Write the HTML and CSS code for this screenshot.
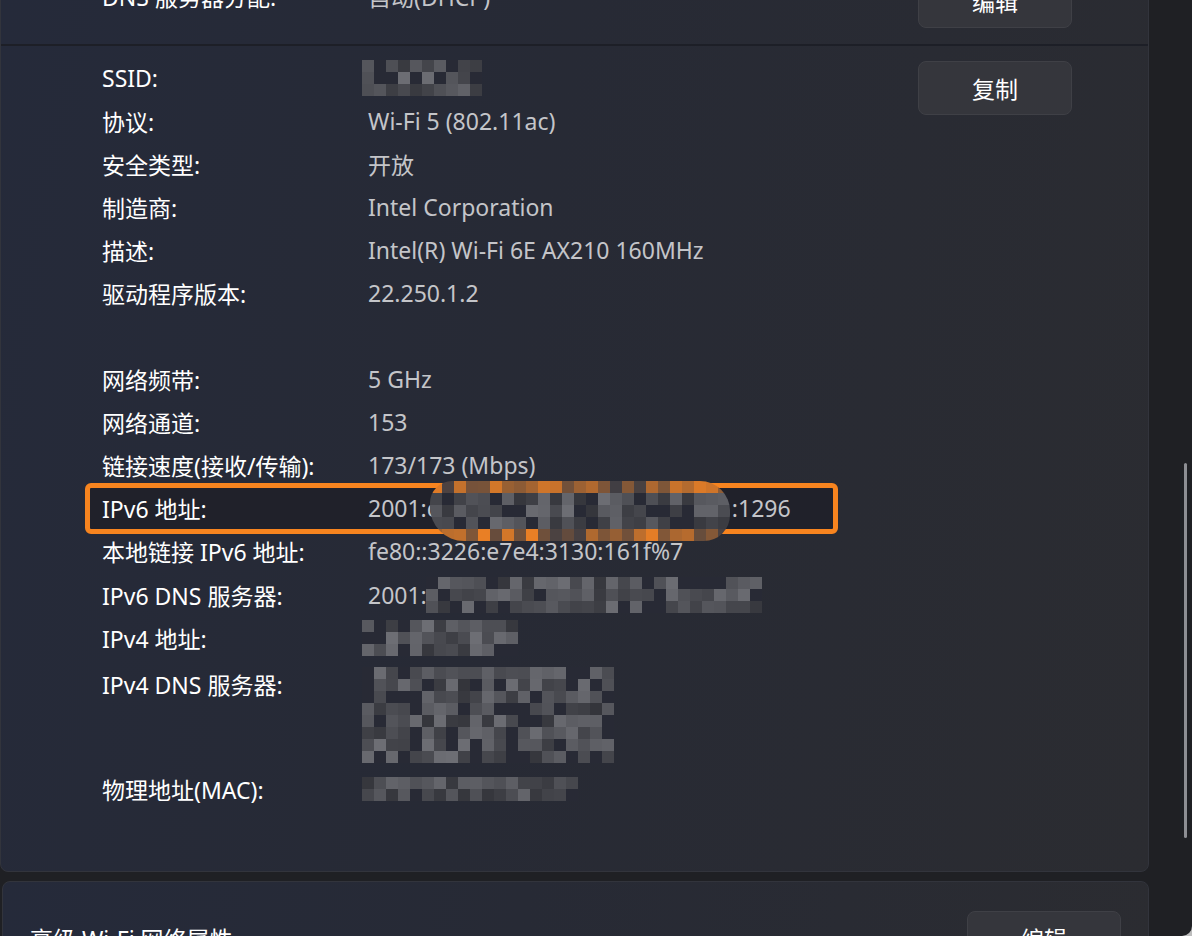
FILE: index.html
```html
<!doctype html>
<html lang="zh-CN">
<head>
    <meta charset="utf-8">
    <meta name="viewport" content="width=device-width, initial-scale=1">
    <title>Wi-Fi 属性</title>
    <link rel="stylesheet" href="styles.css">
</head>
<body>
    <div class="window">
        <div class="content">
            <!-- Tarjeta de propiedades -->
            <div class="card">
                <div class="section top-section">
                    <div class="row">
                        <span class="label">DNS 服务器分配:</span>
                        <span class="value">自动(DHCP)</span>
                    </div>
                    <button class="button">编辑</button>
                </div>

                <div class="section props">
                    <div class="props-list">
                        <div class="row">
                            <span class="label">SSID:</span>
                            <span class="value"><span class="mosaic shift" data-cols="10" data-rows="3" data-seed="7"></span></span>
                        </div>
                        <div class="row">
                            <span class="label">协议:</span>
                            <span class="value">Wi-Fi 5 (802.11ac)</span>
                        </div>
                        <div class="row">
                            <span class="label">安全类型:</span>
                            <span class="value">开放</span>
                        </div>
                        <div class="row">
                            <span class="label">制造商:</span>
                            <span class="value">Intel Corporation</span>
                        </div>
                        <div class="row">
                            <span class="label">描述:</span>
                            <span class="value">Intel(R) Wi-Fi 6E AX210 160MHz</span>
                        </div>
                        <div class="row">
                            <span class="label">驱动程序版本:</span>
                            <span class="value">22.250.1.2</span>
                        </div>
                        <div class="row"></div>
                        <div class="row">
                            <span class="label">网络频带:</span>
                            <span class="value">5 GHz</span>
                        </div>
                        <div class="row">
                            <span class="label">网络通道:</span>
                            <span class="value">153</span>
                        </div>
                        <div class="row">
                            <span class="label">链接速度(接收/传输):</span>
                            <span class="value">173/173 (Mbps)</span>
                        </div>
                        <div class="row highlight">
                            <span class="label">IPv6 地址:</span>
                            <span class="value">2001:c<span class="mosaic blob" data-cols="25" data-rows="5" data-seed="11" data-edge="orange"></span>:1296</span>
                        </div>
                        <div class="row">
                            <span class="label">本地链接 IPv6 地址:</span>
                            <span class="value">fe80::3226:e7e4:3130:161f%7</span>
                        </div>
                        <div class="row">
                            <span class="label">IPv6 DNS 服务器:</span>
                            <span class="value">2001:2<span class="mosaic over" data-cols="28" data-rows="3" data-seed="23"></span></span>
                        </div>
                        <div class="row">
                            <span class="label">IPv4 地址:</span>
                            <span class="value"><span class="mosaic shift" data-cols="13" data-rows="3" data-seed="31"></span></span>
                        </div>
                        <div class="row tall">
                            <span class="label">IPv4 DNS 服务器:</span>
                            <span class="value"><span class="mosaic shift" data-cols="21" data-rows="8" data-seed="47"></span></span>
                        </div>
                        <div class="row">
                            <span class="label">物理地址(MAC):</span>
                            <span class="value"><span class="mosaic shift" data-cols="18" data-rows="2" data-seed="59"></span></span>
                        </div>
                    </div>
                    <button class="button copy">复制</button>
                </div>
            </div>

            <!-- Propiedades avanzadas -->
            <div class="card card-bottom">
                <span class="label">高级 Wi-Fi 网络属性</span>
                <button class="button">编辑</button>
            </div>
        </div>

        <div class="rail"><div class="thumb"></div></div>
    </div>

    <script>
        // Generador pseudoaleatorio para que el mosaico sea siempre igual
        function seeded(seed) {
            let s = seed;
            return function () {
                s = (s * 9301 + 49297) % 233280;
                return s / 233280;
            };
        }

        // Rellenar cada mosaico con celdas grises
        document.querySelectorAll('.mosaic').forEach(function (el) {
            const cols = +el.dataset.cols;
            const rows = +el.dataset.rows;
            const rnd = seeded(+el.dataset.seed);
            const orange = el.dataset.edge === 'orange';
            el.style.gridTemplateColumns = 'repeat(' + cols + ', 12px)';

            for (let y = 0; y < rows; y++) {
                for (let x = 0; x < cols; x++) {
                    const cell = document.createElement('span');
                    const r = rnd();
                    let color;
                    if (orange && (y === 0 || y === rows - 1)) {
                        // borde naranja mezclado con gris
                        const mix = rnd();
                        const a = [240, 130, 36], b = [58, 59, 68];
                        color = 'rgb(' + a.map(function (v, i) { return Math.round(v * mix + b[i] * (1 - mix)); }).join(',') + ')';
                    } else if (r < 0.22) {
                        color = 'rgb(40, 42, 53)';
                    } else {
                        const g = Math.round(52 + rnd() * 58);
                        color = 'rgb(' + g + ',' + (g + 1) + ',' + (g + 7) + ')';
                    }
                    cell.style.background = color;
                    el.appendChild(cell);
                }
            }
        });
    </script>
</body>
</html>
```

FILE: styles.css
```css
/* Colores */
:root {
    --outside: #bdbdbd;
    --window-bg: #1f2024;
    --card-border: #32343c;
    --divider: #1d1f27;
    --label-color: #ffffff;
    --value-color: #c4c5c9;
    --button-bg: #35363c;
    --button-border: #3f4046;
    --highlight: #f7841f;
}

* {
    box-sizing: border-box;
}

body {
    margin: 0;
    background-color: var(--outside);
    font-family: "Noto Sans", "Noto Sans CJK SC", sans-serif;
    font-size: 23px;
    overflow: hidden;
}

.window {
    display: flex;
    width: 1192px;
    height: 936px;
    background-color: var(--window-bg);
    border-bottom-right-radius: 10px;
    overflow: hidden;
}

.content {
    width: 1149px;
    margin-top: -44px;
    display: flex;
    flex-direction: column;
    gap: 9px;
}

.card {
    background: linear-gradient(100deg, #252a3a 0%, #272a35 45%, #2b2c31 100%);
    border: 1px solid var(--card-border);
    border-radius: 0 0 8px 8px;
}

.section {
    display: flex;
    justify-content: space-between;
}

.top-section {
    height: 89px;
    align-items: center;
    padding: 0 76px 0 101px;
    border-bottom: 2px solid var(--divider);
}

.top-section .row {
    margin-top: -10px;
}

.props {
    align-items: flex-start;
    padding: 10px 76px 61px 101px;
}

.props-list {
    flex: 1;
}

.row {
    display: flex;
    align-items: center;
    height: 43.1px;
}

.row.tall {
    height: 108px;
    align-items: flex-start;
    padding-top: 8px;
}

.label {
    width: 266px;
    flex-shrink: 0;
    color: var(--label-color);
    white-space: nowrap;
}

.value {
    display: flex;
    align-items: center;
    color: var(--value-color);
    white-space: nowrap;
}

.highlight {
    position: relative;
    height: 51px;
    width: 753px;
    margin: -4px 0 -4px -17px;
    padding-left: 12px;
    border: 5px solid var(--highlight);
    border-radius: 6px;
    background-color: #20212a;
}

.mosaic {
    display: grid;
    grid-auto-rows: 12px;
    flex-shrink: 0;
}

.mosaic.shift {
    margin-left: -6px;
}

.mosaic.blob {
    margin: 6px 2px 0 -8px;
    border-radius: 22px 30px 26px 34px;
    overflow: hidden;
    position: relative;
    z-index: 1;
}

.mosaic.over {
    margin-left: -14px;
}

.button {
    width: 154px;
    height: 54px;
    flex-shrink: 0;
    background-color: var(--button-bg);
    border: 1px solid var(--button-border);
    border-radius: 8px;
    color: #ffffff;
    font-family: inherit;
    font-size: 23px;
    cursor: pointer;
}

.button.copy {
    margin-top: 5px;
}

.card-bottom {
    display: flex;
    align-items: center;
    justify-content: space-between;
    margin-left: 2px;
    border-radius: 8px;
    padding: 29px 27px 40px 27px;
}

.rail {
    flex: 1;
    padding-top: 463px;
}

.thumb {
    width: 3px;
    height: 375px;
    margin-left: 35px;
    border-radius: 2px;
    background-color: #8d8e93;
}
```
